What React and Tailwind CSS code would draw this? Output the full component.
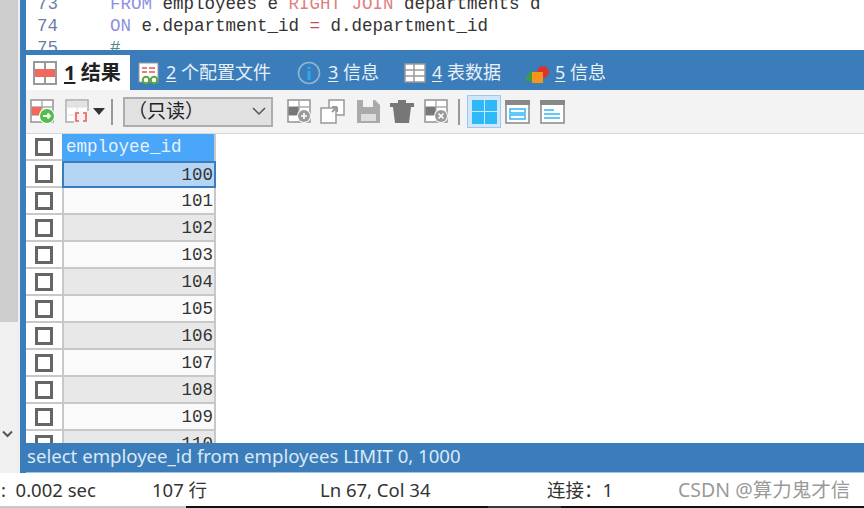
import React from "react";

function Check() {
  return <div className="w-[18px] h-[18px] border-[3px] border-[#666] bg-white" />;
}

function Row({ v, kind }) {
  const bg = kind === "sel" ? "bg-[#b5d5f5] border-2 border-[#3b7dba]" : kind === "even" ? "bg-[#e8e8e8] border-l-2 border-b-2 border-r-2 border-[#c8c8c8]" : "bg-[#fafafa] border-l-2 border-b-2 border-r-2 border-[#c8c8c8]";
  return (
    <div className="flex h-[27px] shrink-0">
      <div className="w-[36px] shrink-0 flex items-center justify-center bg-white border-b-2 border-[#c8c8c8]"><Check /></div>
      <div className={`w-[154px] flex items-center justify-end pr-[1px] pt-[1px] font-['Liberation_Mono',monospace] text-[17.5px] text-[#333] ${bg}`}>{v}</div>
    </div>
  );
}

function GridIcon() {
  return (
    <svg width="24" height="24" viewBox="0 0 24 24">
      <rect x="1" y="1" width="22" height="22" fill="#fff" stroke="#999" strokeWidth="2" />
      <rect x="2" y="8" width="20" height="8" fill="#f0695c" />
      <path d="M12 1V8M12 16V23" stroke="#999" strokeWidth="2" />
    </svg>
  );
}

function Tab({ n, label, icon, gap = "gap-[6px]" }) {
  return (
    <div className={`flex items-center ${gap} text-[#e8f0f8] text-[18px]`}>
      {icon}
      <span><span className="underline underline-offset-2">{n}</span> {label}</span>
    </div>
  );
}

function ToolGrid({ badge, dark = "#777" }) {
  return (
    <svg width="26" height="25" viewBox="0 0 26 25">
      <rect x="1" y="1" width="22" height="22" fill="#fff" stroke="#999" strokeWidth="1.6" />
      <path d="M1 8H23M1 16H23M12 1V23" stroke="#aaa" strokeWidth="1.4" />
      <rect x="1.5" y="8" width="10" height="8" fill={dark} />
      <circle cx="17" cy="17" r={badge === "add" ? 8 : 7} fill="#fff" />
      <circle cx="17" cy="17" r={badge === "add" ? 7 : 6} fill={badge === "add" ? "#4fbf4a" : "#9a9a9a"} />
      {badge === "add" ? <path d="M13 17H20M17.5 14.5L20 17L17.5 19.5" stroke="#fff" strokeWidth="1.8" fill="none" /> : null}
      {badge === "plus" ? <path d="M14 17H20M17 14V20" stroke="#fff" strokeWidth="1.6" /> : null}
      {badge === "x" ? <path d="M14.5 14.5L19.5 19.5M19.5 14.5L14.5 19.5" stroke="#fff" strokeWidth="1.6" /> : null}
    </svg>
  );
}

export default function App() {
  const rows = [101, 102, 103, 104, 105, 106, 107, 108, 109];
  return (
    <div className="w-[864px] h-[508px] overflow-hidden bg-white flex flex-col font-['Noto_Sans','Noto_Sans_CJK_SC',sans-serif]">
      <div className="flex flex-1 min-h-0">
        <div className="w-[20px] shrink-0 bg-[#f0f0f0] flex flex-col">
          <div className="h-[322px] w-[18px] shrink-0 bg-[#cdcdcd]" />
          <div className="flex-1 flex flex-col justify-end pb-[35px] pl-[2px]">
            <svg width="11" height="8" viewBox="0 0 11 8"><path d="M1 1.5L5.5 6L10 1.5" stroke="#555" strokeWidth="2" fill="none" /></svg>
          </div>
        </div>
        <div className="flex-1 flex flex-col min-w-0 border-l-[6px] border-[#3b7dba]">
          <div className="h-[50px] shrink-0 overflow-hidden font-['Liberation_Mono',monospace] text-[17.5px] leading-[22px] bg-white">
            <div className="-mt-[7px] pl-[11px]">
              <div className="flex"><span className="w-[73px] text-[#6a7fa8]">73</span><span className="whitespace-pre"><span className="text-[#8f8fe0]">FROM</span><span className="text-[#333]"> employees e </span><span className="text-[#e07f7f]">RIGHT JOIN</span><span className="text-[#333]"> departments d</span></span></div>
              <div className="flex"><span className="w-[73px] text-[#6a7fa8]">74</span><span className="whitespace-pre"><span className="text-[#8f8fe0]">ON</span><span className="text-[#333]"> e.department_id </span><span className="text-[#c05050]">=</span><span className="text-[#333]"> d.department_id</span></span></div>
              <div className="flex"><span className="w-[73px] text-[#6a7fa8]">75</span><span className="text-[#4a8a8a]">#</span></div>
            </div>
          </div>
          <div className="h-[40px] shrink-0 bg-[#3b7dba] flex items-end">
            <div className="h-[35px] w-[104px] bg-white flex items-center pl-[7px] gap-[7px]">
              <GridIcon />
              <span className="text-[20px] font-bold text-[#222]"><span className="underline underline-offset-2">1</span> 结果</span>
            </div>
            <div className="h-[35px] flex items-center pl-[8px]">
              <Tab n="2" label="个配置文件" icon={
                <svg width="22" height="24" viewBox="0 0 22 24"><rect x="1" y="2" width="19" height="19" fill="#fff" stroke="#999" /><path d="M4 7H9M11 7H17M4 11H9M11 11H17" stroke="#e0564f" strokeWidth="1.5" /><circle cx="8" cy="19" r="3.2" fill="#fff" stroke="#5aa83f" strokeWidth="2" /><circle cx="16" cy="19" r="3.2" fill="#fff" stroke="#5aa83f" strokeWidth="2" /></svg>
              } />
              <div className="w-[26px]" />
              <Tab n="3" label="信息" gap="gap-[7px]" icon={
                <svg width="24" height="24" viewBox="0 0 24 24"><circle cx="12" cy="12" r="10.5" fill="none" stroke="#8fb3d4" strokeWidth="1.6" /><circle cx="12" cy="7" r="1.6" fill="#2fa8ee" /><rect x="10.5" y="10" width="3" height="9" fill="#2fa8ee" /></svg>
              } />
              <div className="w-[25px]" />
              <Tab n="4" label="表数据" icon={
                <svg width="22" height="20" viewBox="0 0 22 20"><rect x="1" y="1" width="20" height="18" fill="#fff" stroke="#999" strokeWidth="1.5" /><path d="M1 7H21M1 13H21M10 1V19" stroke="#999" strokeWidth="1.5" /></svg>
              } />
              <div className="w-[24px]" />
              <Tab n="5" label="信息" gap="gap-[4px]" icon={
                <svg width="26" height="24" viewBox="0 0 26 24"><path d="M0 20L6 9L12 20Z" fill="#3f9c3f" /><circle cx="18" cy="11" r="6" fill="#d9342b" /><rect x="7" y="11" width="11" height="11" fill="#f7941d" /></svg>
              } />
            </div>
          </div>
          <div className="h-[43px] shrink-0 bg-[#f3f3f3] flex items-center pl-[4px]">
            <ToolGrid badge="add" dark="#f0695c" />
            <div className="w-[9px]" />
            <svg width="26" height="25" viewBox="0 0 26 25"><rect x="1" y="1" width="22" height="22" fill="#fff" stroke="#aaa" strokeWidth="1.5" /><rect x="2" y="2" width="20" height="6" fill="#e3e3e3" /><path d="M1 8H23M1 16H23M12 1V23" stroke="#ddd" /><rect x="9" y="12" width="16" height="12" fill="#f3f3f3" /><path d="M14 14H11V22H14M18 14H21V22H18" stroke="#e9604f" strokeWidth="1.6" fill="none" /></svg>
            <svg width="12" height="8" viewBox="0 0 12 8" className="ml-[2px]"><path d="M0 0H12L6 7Z" fill="#333" /></svg>
            <div className="w-[2px] h-[26px] bg-[#999] ml-[6px]" />
            <div className="ml-[10px] w-[150px] h-[30px] bg-[#e1e1e1] border-2 border-[#adadad] flex items-center justify-between pl-[3px] pr-[5px] text-[19px] text-[#222]">
              <span>（只读）</span>
              <svg width="14" height="9" viewBox="0 0 14 9"><path d="M1 1L7 7L13 1" stroke="#555" strokeWidth="1.5" fill="none" /></svg>
            </div>
            <div className="w-[14px]" />
            <div className="flex items-center">
              <ToolGrid badge="plus" />
              <svg width="26" height="26" viewBox="0 0 26 26" className="ml-[7px]"><rect x="9" y="1" width="15" height="15" fill="#fff" stroke="#999" strokeWidth="1.5" /><rect x="1" y="9" width="15" height="15" fill="#fff" stroke="#999" strokeWidth="1.5" /><path d="M12 13L17 8M17 8V13M17 8H12" stroke="#999" strokeWidth="2" fill="none" /></svg>
              <svg width="25" height="25" viewBox="0 0 25 25" className="ml-[10px]"><path d="M1 1H19L24 6V24H1Z" fill="#aaa" /><rect x="7" y="1" width="10" height="7" fill="#f3f3f3" /><rect x="5" y="15" width="15" height="7" fill="#ddd" /></svg>
              <svg width="25" height="25" viewBox="0 0 25 25" className="ml-[9px]"><path d="M0 4H24V8H0Z" fill="#777" /><rect x="8" y="1" width="8" height="4" fill="#777" /><path d="M3 8H21L19 24H5Z" fill="#777" /></svg>
              <div className="ml-[9px]"><ToolGrid badge="x" /></div>
            </div>
            <div className="w-[2px] h-[26px] bg-[#999] ml-[8px]" />
            <div className="ml-[7px] w-[34px] h-[33px] bg-[#cfe6fb] border border-[#9cc9f0] flex items-center justify-center">
              <svg width="25" height="24" viewBox="0 0 25 24"><rect width="12" height="11" fill="#2db8f8" /><rect x="13" width="12" height="11" fill="#2db8f8" /><rect y="12" width="12" height="12" fill="#2db8f8" /><rect x="13" y="12" width="12" height="12" fill="#2db8f8" /></svg>
            </div>
            <svg width="25" height="24" viewBox="0 0 25 24" className="ml-[4px]"><rect x="1" y="1" width="23" height="22" fill="#fff" stroke="#888" strokeWidth="1.5" /><rect x="0" y="0" width="25" height="5" fill="#888" /><rect x="5" y="9" width="15" height="4" fill="#fff" stroke="#2db8f8" strokeWidth="1.5" /><rect x="5" y="15" width="15" height="4" fill="#fff" stroke="#2db8f8" strokeWidth="1.5" /></svg>
            <svg width="25" height="24" viewBox="0 0 25 24" className="ml-[10px]"><rect x="1" y="1" width="23" height="22" fill="#fff" stroke="#888" strokeWidth="1.5" /><rect x="0" y="0" width="25" height="5" fill="#888" /><path d="M4 10H14M4 14H20M4 18H20" stroke="#2db8f8" strokeWidth="1.5" /></svg>
          </div>
          <div className="flex-1 min-h-0 overflow-hidden bg-white">
            <div className="flex h-[28px] border-t border-[#d8d8d8]">
              <div className="w-[36px] shrink-0 flex items-center justify-center bg-white border-b-2 border-[#c8c8c8]"><Check /></div>
              <div className="w-[154px] bg-[#4aa6f8] text-[#e6f3ff] font-['Liberation_Mono',monospace] text-[17.5px] flex items-center pl-[4px] border-r-2 border-[#c8c8c8]">employee_id</div>
            </div>
            <Row v="100" kind="sel" />
            {rows.map((v, i) => <Row key={v} v={v} kind={i % 2 === 0 ? "odd" : "even"} />)}
            <Row v="110" kind="even" />
          </div>
          <div className="h-[30px] shrink-0 bg-[#3b7dba] border-b border-[#9cc3e6] text-[#dce9f5] text-[18.6px] flex items-center pl-[1px] pb-[3px]">select employee_id from employees LIMIT 0, 1000</div>
        </div>
      </div>
      <div className="h-[33px] shrink-0 bg-white flex items-center pt-[1px] text-[18.5px] text-[#333]">
        <span className="w-[152px] pl-[1px] whitespace-pre">:  0.002 sec</span>
        <span className="w-[168px]">107 行</span>
        <span className="w-[227px]">Ln 67, Col 34</span>
        <span className="w-[131px]">连接：1</span>
        <span className="text-[#9a9a9a] text-[19.5px]">CSDN @算力鬼才信</span>
      </div>
      <div className="h-[2px] shrink-0 flex"><div className="w-[186px] bg-[#c8c8c8]" /><div className="w-[302px] bg-[#111]" /><div className="w-[73px] bg-[#3a3a3a]" /><div className="flex-1 bg-[#111]" /></div>
    </div>
  );
}
